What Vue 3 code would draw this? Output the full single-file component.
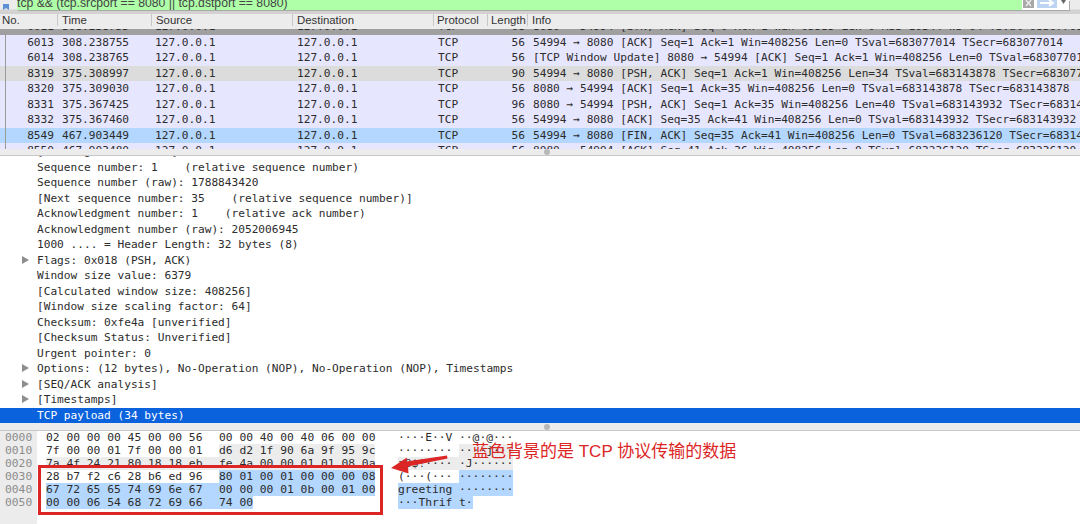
<script setup>
const packets = [
  { no: '6011', time: '308.238755', len: '68', info: '8080 → 54994 [SYN, ACK] Seq=0 Ack=1 Win=65535 Len=0 MSS=16344 WS=64 TSval=683077014', cls: 'syn' },
  { no: '6013', time: '308.238755', len: '56', info: '54994 → 8080 [ACK] Seq=1 Ack=1 Win=408256 Len=0 TSval=683077014 TSecr=683077014', cls: '' },
  { no: '6014', time: '308.238765', len: '56', info: '[TCP Window Update] 8080 → 54994 [ACK] Seq=1 Ack=1 Win=408256 Len=0 TSval=683077014 TSecr=683077014', cls: '' },
  { no: '8319', time: '375.308997', len: '90', info: '54994 → 8080 [PSH, ACK] Seq=1 Ack=1 Win=408256 Len=34 TSval=683143878 TSecr=683077014', cls: 'psh' },
  { no: '8320', time: '375.309030', len: '56', info: '8080 → 54994 [ACK] Seq=1 Ack=35 Win=408256 Len=0 TSval=683143878 TSecr=683143878', cls: '' },
  { no: '8331', time: '375.367425', len: '96', info: '8080 → 54994 [PSH, ACK] Seq=1 Ack=35 Win=408256 Len=40 TSval=683143932 TSecr=683143878', cls: '' },
  { no: '8332', time: '375.367460', len: '56', info: '54994 → 8080 [ACK] Seq=35 Ack=41 Win=408256 Len=0 TSval=683143932 TSecr=683143932', cls: '' },
  { no: '8549', time: '467.903449', len: '56', info: '54994 → 8080 [FIN, ACK] Seq=35 Ack=41 Win=408256 Len=0 TSval=683236120 TSecr=683143932', cls: 'sel' },
  { no: '8550', time: '467.903480', len: '56', info: '8080 → 54994 [ACK] Seq=41 Ack=36 Win=408256 Len=0 TSval=683236120 TSecr=683236120', cls: '' },
]
const headers = [
  { t: 'No.', c: 'h-no' }, { t: 'Time', c: 'h-time' }, { t: 'Source', c: 'h-src' },
  { t: 'Destination', c: 'h-dst' }, { t: 'Protocol', c: 'h-proto' }, { t: 'Length', c: 'h-len' }, { t: 'Info', c: 'h-info' },
]
const details = [
  { t: '[TCP Segment Len: 34]' },
  { t: 'Sequence number: 1    (relative sequence number)' },
  { t: 'Sequence number (raw): 1788843420' },
  { t: '[Next sequence number: 35    (relative sequence number)]' },
  { t: 'Acknowledgment number: 1    (relative ack number)' },
  { t: 'Acknowledgment number (raw): 2052006945' },
  { t: '1000 .... = Header Length: 32 bytes (8)' },
  { t: 'Flags: 0x018 (PSH, ACK)', arrow: true },
  { t: 'Window size value: 6379' },
  { t: '[Calculated window size: 408256]' },
  { t: '[Window size scaling factor: 64]' },
  { t: 'Checksum: 0xfe4a [unverified]' },
  { t: '[Checksum Status: Unverified]' },
  { t: 'Urgent pointer: 0' },
  { t: 'Options: (12 bytes), No-Operation (NOP), No-Operation (NOP), Timestamps', arrow: true },
  { t: '[SEQ/ACK analysis]', arrow: true },
  { t: '[Timestamps]', arrow: true },
  { t: 'TCP payload (34 bytes)', sel: true },
]
// a/b are the two hex groups, c/d the two ascii groups; *k is the highlight: '', 'g' grey, 'b' blue
const hexRows = [
  { off: '0000', a: '02 00 00 00 45 00 00 56', ak: '', b: '00 00 40 00 40 06 00 00', bk: '', c: '····E··V', ck: '', d: '··@·@···', dk: '' },
  { off: '0010', a: '7f 00 00 01 7f 00 00 01', ak: '', b: 'd6 d2 1f 90 6a 9f 95 9c', bk: 'g', c: '········', ck: '', d: '····j···', dk: 'g' },
  { off: '0020', a: '7a 4f 24 21 80 18 18 eb', ak: 'g', b: 'fe 4a 00 00 01 01 08 0a', bk: 'g', c: 'zO$!····', ck: 'g', d: '·J······', dk: 'g' },
  { off: '0030', a: '28 b7 f2 c6 28 b6 ed 96', ak: '', b: '80 01 00 01 00 00 00 08', bk: 'b', c: '(···(···', ck: '', d: '········', dk: 'b' },
  { off: '0040', a: '67 72 65 65 74 69 6e 67', ak: 'b', b: '00 00 00 01 0b 00 01 00', bk: 'b', c: 'greeting', ck: 'b', d: '········', dk: 'b' },
  { off: '0050', a: '00 00 06 54 68 72 69 66', ak: 'b', b: '74 00', bk: 'b', c: '···Thrif', ck: 'b', d: 't·', dk: 'b' },
]
</script>

<template>
  <div class="app">
    <div class="filterbar">
      <svg class="bookmark" width="6" height="6" viewBox="0 0 6 6"><path d="M0 0h6v6L3 4 0 6z" fill="#5b8fd6"/></svg>
      <div class="filter">
        <span class="filter-text">tcp &amp;&amp; (tcp.srcport == 8080 || tcp.dstport == 8080)</span>
        <span class="filter-tools">
          <svg width="11" height="8" viewBox="0 0 11 8"><rect width="11" height="8" fill="#a8a8a8"/><path d="M3 0l5 6M8 0L3 6" stroke="#eee" stroke-width="1.3"/></svg>
          <svg width="20" height="8" viewBox="0 0 20 8"><rect width="20" height="8" fill="#bcd3f2"/><path d="M3 3h12M12 0l4 3-4 3" stroke="#fff" stroke-width="2" fill="none"/></svg>
          <svg class="drop" width="7" height="8" viewBox="0 0 7 8"><path d="M1 0h5L3.500 4z" fill="#666"/></svg>
        </span>
      </div>
    </div>

    <div class="head">
      <span v-for="h in headers" :key="h.t" class="hcell" :class="h.c">{{ h.t }}</span>
    </div>

    <div class="list">
      <div class="list-inner">
        <div v-for="p in packets" :key="p.no" class="row" :class="p.cls">
          <span class="no">{{ p.no }}</span>
          <span class="time">{{ p.time }}</span>
          <span class="src">127.0.0.1</span>
          <span class="dst">127.0.0.1</span>
          <span class="proto">TCP</span>
          <span class="len">{{ p.len }}</span>
          <span class="info">{{ p.info }}</span>
        </div>
      </div>
      <i class="gutter-line"></i>
    </div>
    <div class="splitter top"><i></i></div>

    <div class="detail">
      <div class="detail-inner">
        <div v-for="d in details" :key="d.t" class="dline" :class="{ selected: d.sel }">
          <span v-if="d.arrow" class="tri"></span>{{ d.t }}
        </div>
      </div>
    </div>

    <div class="splitter"><i></i></div>

    <div class="hex">
      <div class="offsets">
        <div v-for="r in hexRows" :key="r.off">{{ r.off }}</div>
      </div>
      <div class="bytes">
        <div v-for="r in hexRows" :key="r.off" class="hexrow">
          <div class="col8"><span :class="r.ak">{{ r.a }}</span></div>
          <div class="col8b"><span :class="r.bk">{{ r.b }}</span></div>
        </div>
      </div>
      <div class="ascii">
        <div v-for="r in hexRows" :key="r.off" class="hexrow">
          <div class="col-a"><span :class="r.ck">{{ r.c }}</span></div>
          <div class="col-b"><span :class="r.dk">{{ r.d }}</span></div>
        </div>
      </div>
    </div>

    <div class="redbox"></div>
    <svg class="redarrow" width="60" height="22" viewBox="0 0 60 22">
      <path d="M1 14 L17 3.500 L16.500 7.500 L57 1.500 L57.500 4.500 L18 12.500 L18.500 19.500 Z" fill="#dc2626"/>
    </svg>
    <div class="note">蓝色背景的是 TCP 协议传输的数据</div>
  </div>
</template>

<style scoped>
.app {
  position: relative;
  width: 1080px;
  height: 524px;
  overflow: hidden;
  background: #fff;
  font-family: "DejaVu Sans Mono", monospace;
  color: #2c2c2c;
}
.filterbar {
  height: 14px;
  background: linear-gradient(#ececec 0 9px, #d2d2d2 10px);
  display: flex;
  box-sizing: border-box;
  padding-right: 11px;
}
.bookmark { margin: 4px 8px 0 3px; flex: none; }
.filter {
  flex: 1;
  height: 10px;
  background: #afffa9;
  box-shadow: 1px 1px 0 #a8a8a8;
  display: flex;
  justify-content: space-between;
  overflow: hidden;
}
.filter-text {
  font: 12.2px/7px "Liberation Sans", sans-serif;
  color: #444;
  white-space: nowrap;
}
.filter-tools {
  display: flex;
  gap: 3px;
  background: #fff;
  padding: 0 2px 0 1px;
}
.head {
  height: 15px;
  background: #ececec;
  display: flex;
  font: 11.4px/12px "Liberation Sans", sans-serif;
  color: #333;
}
.hcell {
  box-sizing: border-box;
  border-right: 1px solid #c8c8c8;
  height: 12px;
  overflow: hidden;
  white-space: nowrap;
}
.h-no { width: 58px; padding-left: 2px; }
.h-time { width: 94px; padding-left: 4px; }
.h-src { width: 141px; padding-left: 4px; }
.h-dst { width: 141px; padding-left: 4px; }
.h-proto { width: 54px; padding-left: 3px; }
.h-len { width: 40px; padding-left: 3px; }
.h-info { flex: 1; border: 0; padding-left: 4px; }
.list {
  position: relative;
  height: 120px;
  overflow: hidden;
  background: #e7e6ff;
}
.list-inner { margin-top: -10px; }
.row {
  height: 15.5px;
  display: flex;
  font-size: 11.15px;
  line-height: 15.5px;
  white-space: nowrap;
  background: #e7e6ff;
}
.row.syn { background: #a0a0a0; }
.row.psh { background: #dcdcdc; }
.row.sel { background: #b3d7ff; }
.no { width: 54px; text-align: right; flex: none; }
.time { width: 94px; padding-left: 8px; box-sizing: border-box; flex: none; }
.src { width: 141px; padding-left: 7px; box-sizing: border-box; flex: none; }
.dst { width: 141px; padding-left: 8px; box-sizing: border-box; flex: none; }
.proto { width: 54px; padding-left: 8px; box-sizing: border-box; flex: none; }
.len { width: 41px; text-align: right; box-sizing: border-box; flex: none; }
.info { padding-left: 8px; flex: none; }
.gutter-line {
  position: absolute;
  left: 5px;
  top: 0;
  bottom: 0;
  width: 1px;
  background: #9a9a9a;
}
.splitter {
  height: 8px;
  box-sizing: border-box;
  background: #ececec;
  border-bottom: 1px solid #c8c8c8;
  display: flex;
  align-items: center;
  padding-left: 544px;
}
.splitter.top { height: 7px; }
.splitter i {
  width: 6px;
  height: 6px;
  border-radius: 50%;
  background: #b8b8b8;
}
.detail {
  height: 267px;
  overflow: hidden;
  background: #fff;
}
.detail-inner { margin-top: -12px; }
.dline {
  height: 15.5px;
  padding-left: 37px;
  font-size: 11.15px;
  line-height: 15.5px;
  white-space: pre;
  position: relative;
}
.dline.selected { background: #0a63dd; color: #fff; }
.tri {
  position: absolute;
  left: 22px;
  top: 3px;
  border-left: 7px solid #8e8e8e;
  border-top: 4px solid transparent;
  border-bottom: 4px solid transparent;
}
.hex {
  display: flex;
  height: 93px;
  font-size: 11.3px;
  line-height: 13px;
}
.offsets {
  width: 37px;
  flex: none;
  box-sizing: border-box;
  padding-left: 5px;
  background: #ececec;
  color: #8c8c8c;
}
.bytes { width: 360px; flex: none; padding-left: 9px; box-sizing: border-box; }
.hexrow { display: flex; height: 13px; }
.col8 { width: 173px; flex: none; white-space: pre; }
.col8b { flex: none; white-space: pre; }
.col-a { width: 61px; flex: none; white-space: pre; }
.col-b { flex: none; white-space: pre; }
.hexrow span { display: block; height: 13px; }
.col8b span, .col-b span { width: fit-content; }
.hexrow .g { background: #ececec; }
.hexrow .b { background: #b3d7ff; }
.ascii { padding-left: 1px; }
.redbox {
  position: absolute;
  left: 38px;
  top: 465px;
  width: 345px;
  height: 50px;
  box-sizing: border-box;
  border: 3px solid #dc2626;
}
.redarrow { position: absolute; left: 390px; top: 454px; }
.note {
  position: absolute;
  left: 472px;
  top: 441px;
  font: 17px/22px "Liberation Sans", "Noto Sans CJK SC", sans-serif;
  color: #dc2626;
  white-space: nowrap;
}
</style>
<style>
html, body { margin: 0; padding: 0; }
</style>
